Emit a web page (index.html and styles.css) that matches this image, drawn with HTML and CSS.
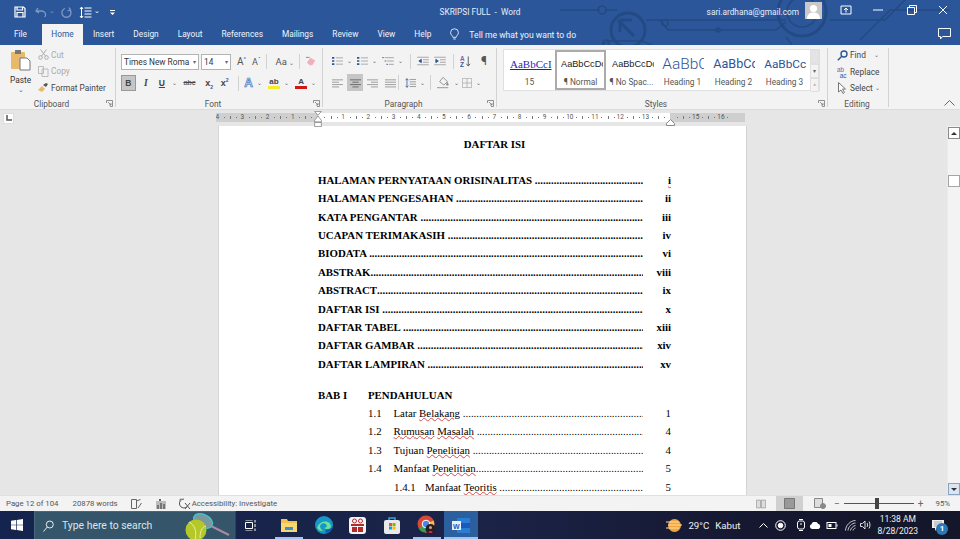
FILE: index.html
```html
<!DOCTYPE html>
<html lang="en">
<head>
<meta charset="utf-8">
<title>SKRIPSI FULL - Word</title>
<link rel="stylesheet" href="styles.css">
</head>
<body>
<div class="app">
  <header class="chrome">
    <svg class="circuit" width="400" height="45" viewBox="0 0 400 45" fill="none" stroke="#234a83" stroke-width="1.6">
      <circle cx="68" cy="30" r="17" stroke-width="3"/>
      <path d="M58 20l16 16M60 20h12M60 20v12" stroke-width="3"/>
      <circle cx="242" cy="12" r="24" stroke-width="3"/>
      <circle cx="242" cy="12" r="15"/>
      <path d="M0 10h40M45 10h12M42 44l8-3h32l10 4M86 20h140M100 20l8 10h108l10-8M270 20h55l24-24M300 40l30-30h60M232 45l-6-8"/>
      <circle cx="42" cy="10" r="4"/><circle cx="46" cy="43" r="3"/><circle cx="105" cy="23" r="3"/><circle cx="158" cy="30" r="2"/>
    </svg>
    <div class="title-row">
      <div class="qat">
        <svg class="qi-save" width="12" height="12" viewBox="0 0 12 12" fill="none" stroke="#fff" stroke-width="1.2"><path d="M1 1h8.500l1.500 1.500v8.500h-10zM3 1v3h5.500v-3M3 11v-4.500h6v4.500"/></svg>
        <svg class="qi-undo" width="12" height="12" viewBox="0 0 12 12" fill="none" stroke="#7f9ac4" stroke-width="1.300"><path d="M3 2l-2 3 3 2M1.500 5h5c3 0 4.500 2 4 4.500l-1 1.500"/></svg>
        <span class="qat-caret dim">⌄</span>
        <svg class="qi-redo" width="12" height="12" viewBox="0 0 12 12" fill="none" stroke="#7f9ac4" stroke-width="1.300"><path d="M8 1.500l1.500 2.500-3 1M9 4a4.500 4.500 0 1 1-5-1.500"/></svg>
        <svg class="qi-spacing" width="13" height="13" viewBox="0 0 13 13" fill="none" stroke="#fff"><path d="M5.500 2h7M5.500 5h7M5.500 8h7M5.500 11h7M2.500 1v11M1 3l1.500-2 1.500 2M1 10l1.500 2 1.500-2"/></svg>
        <span class="qat-caret">⌄</span>
        <svg class="qi-custom" width="7" height="7" viewBox="0 0 7 7" fill="#fff"><path d="M1 1h5v1h-5zM1 3.500h5l-2.500 2.500z"/></svg>
      </div>
      <div class="doc-title">SKRIPSI FULL &nbsp;-&nbsp; Word</div>
      <div class="account">
        <span class="email">sari.ardhana@gmail.com</span>
        <svg class="avatar" width="17" height="17" viewBox="0 0 17 17"><rect width="17" height="17" fill="#c9c9c9"/><circle cx="8.500" cy="6.500" r="3.600" fill="#fff"/><path d="M2 17c0-5 3-6.500 6.500-6.500s6.500 1.500 6.500 6.500z" fill="#fff"/></svg>
        <svg class="win win-ribbon" width="12" height="10" viewBox="0 0 12 10" fill="none" stroke="#fff"><path d="M1 1h10v8h-10z"/><path d="M6 7.500v-4M4 5l2-2 2 2" /></svg>
        <svg class="win win-min" width="10" height="10" viewBox="0 0 10 10" stroke="#fff"><path d="M0 5h10"/></svg>
        <svg class="win win-max" width="10" height="10" viewBox="0 0 10 10" fill="none" stroke="#fff"><path d="M.5 2.500h7v7h-7zM2.500 2.500v-2h7v7h-2"/></svg>
        <svg class="win win-close" width="10" height="10" viewBox="0 0 10 10" stroke="#fff"><path d="M1 1l8 8M9 1l-8 8"/></svg>
      </div>
    </div>
    <nav class="tabs">
      <span class="tab tab-file">File</span>
      <span class="tab tab-home">Home</span>
      <span class="tab tab-insert">Insert</span>
      <span class="tab tab-gap">Design</span>
      <span class="tab tab-gap">Layout</span>
      <span class="tab tab-gap">References</span>
      <span class="tab tab-gap">Mailings</span>
      <span class="tab tab-gap">Review</span>
      <span class="tab tab-gap">View</span>
      <span class="tab tab-gap">Help</span>
      <svg class="bulb" width="9" height="13" viewBox="0 0 11 14" fill="none" stroke="#fff"><path d="M3.500 10.500c0-2-2.800-3-2.800-5.700a4.800 4.800 0 0 1 9.600 0c0 2.700-2.800 3.700-2.800 5.700zM4 12.500h3"/></svg>
      <span class="tell">Tell me what you want to do</span>
      <svg class="comment" width="13" height="12" viewBox="0 0 13 12" fill="none" stroke="#fff"><path d="M.5.500h12v8h-8l-2 2.500v-2.500h-2z"/></svg>
    </nav>
  </header>

  <section class="ribbon">
    <div class="group g-clip">
      <div class="group-body clip-body">
        <div class="paste">
          <svg width="21" height="22" viewBox="0 0 21 22"><rect x="1" y="3" width="14" height="17" fill="#e8b968" rx="1"/><rect x="5" y="1" width="6" height="4" fill="#777"/><path d="M10 9h7l3 3v9h-10z" fill="#fff" stroke="#777"/></svg>
          <span class="paste-label">Paste</span>
          <span class="caret">⌄</span>
        </div>
        <div class="clip-list">
          <div class="clip-item off">
            <svg width="11" height="11" viewBox="0 0 11 11" fill="none" stroke="#aaa"><circle cx="2.500" cy="8.500" r="1.800"/><circle cx="8.500" cy="8.500" r="1.800"/><path d="M3.500 7l5-6.500M7.500 7l-5-6.500"/></svg>
            <span>Cut</span>
          </div>
          <div class="clip-item off">
            <svg width="11" height="11" viewBox="0 0 11 11" fill="#f3f3f3" stroke="#bbb"><path d="M.5.500h5v7h-5zM4 3h6v7.500h-6z"/></svg>
            <span>Copy</span>
          </div>
          <div class="clip-item">
            <svg width="11" height="11" viewBox="0 0 11 11"><path d="M0 8l4-4 3 3-3 3z" fill="#e8b968"/><path d="M5 3l3-2 2 1-2 3z" fill="#555"/></svg>
            <span>Format Painter</span>
          </div>
        </div>
      </div>
      <div class="group-label">Clipboard<svg class="launch" width="7" height="7" viewBox="0 0 7 7" fill="none" stroke="#777" stroke-width=".8"><path d="M.5 3v-2.500h6v6h-2.500M2 2l3 3M5 3v2h-2"/></svg></div>
    </div>

    <div class="group g-font">
      <div class="group-body font-body">
        <div class="font-row">
          <div class="select sel-font"><span>Times New Roma</span><i class="mini">▾</i></div>
          <div class="select sel-size"><span>14</span><i class="mini">▾</i></div>
          <span class="fbtn grow">A<sup>^</sup></span>
          <span class="fbtn shrink">A<sup>ˇ</sup></span>
          <span class="vsep"></span>
          <span class="fbtn case">Aa <i class="mini">⌄</i></span>
          <span class="vsep"></span>
          <svg class="eraser" width="12" height="11" viewBox="0 0 13 12"><path d="M2 7l4-5 5 3-3 5h-3z" fill="#efb0ba"/><path d="M1 1.500h4" stroke="#888"/></svg>
        </div>
        <div class="font-row font-row2">
          <span class="fmt fmt-b">B</span>
          <span class="fmt fmt-i">I</span>
          <span class="fmt fmt-u">U</span><i class="mini sp">⌄</i>
          <span class="fmt fmt-s">abc</span>
          <span class="fmt fmt-x">x<sub>2</sub></span>
          <span class="fmt fmt-x">x<sup>2</sup></span>
          <span class="vsep"></span>
          <span class="fx">A</span><i class="mini sp">⌄</i>
          <span class="hi"><b>ab</b><u class="hi-bar yellow"></u></span><i class="mini sp">⌄</i>
          <span class="hi"><b>A</b><u class="hi-bar red"></u></span><i class="mini sp">⌄</i>
        </div>
      </div>
      <div class="group-label">Font<svg class="launch" width="7" height="7" viewBox="0 0 7 7" fill="none" stroke="#777" stroke-width=".8"><path d="M.5 3v-2.500h6v6h-2.500M2 2l3 3M5 3v2h-2"/></svg></div>
    </div>

    <div class="group g-para">
      <div class="group-body para-body">
        <div class="para-row">
          <svg width="11" height="10" viewBox="0 0 14 12" stroke="#999"><path d="M5 2h9M5 6h9M5 10h9"/><path d="M0 2h3M0 6h3M0 10h3" stroke="#2b579a" stroke-width="2"/></svg><i class="mini sp">⌄</i>
          <svg width="11" height="10" viewBox="0 0 14 12" stroke="#999"><path d="M5 2h9M5 6h9M5 10h9"/><path d="M0 2h3M0 6h3M0 10h3" stroke="#2b579a" stroke-width="2"/></svg><i class="mini sp">⌄</i>
          <svg width="12" height="10" viewBox="0 0 14 12" stroke="#999"><path d="M3 2h11M6 6h8M8 10h6"/><path d="M0 2h2M3 6h2M5 10h2" stroke="#2b579a"/></svg><i class="mini sp">⌄</i>
          <span class="vsep"></span>
          <svg class="ind" width="12" height="10" viewBox="0 0 14 12" stroke="#999"><path d="M0 1.500h14M7 4.500h7M7 7.500h7M0 10.500h14"/><path d="M5 4l-3 2 3 2z" fill="#2b579a" stroke="#2b579a"/></svg>
          <svg class="ind" width="12" height="10" viewBox="0 0 14 12" stroke="#999"><path d="M0 1.500h14M7 4.500h7M7 7.500h7M0 10.500h14"/><path d="M2 4l3 2-3 2z" fill="#2b579a" stroke="#2b579a"/></svg>
          <span class="vsep"></span>
          <svg width="11" height="13" viewBox="0 0 12 13" fill="none"><text x="0" y="6" class="az a">A</text><text x="0" y="13" class="az z">Z</text><path d="M9 1v10M7 9l2 2.500 2-2.500" stroke="#555"/></svg>
          <span class="pilcrow">¶</span>
        </div>
        <div class="para-row para-row2">
          <svg class="al al-first" width="11" height="10" viewBox="0 0 14 12" stroke="#888"><path d="M0 2h14M0 5h9M0 8h14M0 11h9"/></svg>
          <span class="al-on"><svg width="11" height="10" viewBox="0 0 14 12" stroke="#555"><path d="M0 2h14M3 5h8M0 8h14M3 11h8"/></svg></span>
          <svg class="al al-right" width="11" height="10" viewBox="0 0 14 12" stroke="#888"><path d="M0 2h14M5 5h9M0 8h14M5 11h9"/></svg>
          <svg class="al" width="11" height="10" viewBox="0 0 14 12" stroke="#888"><path d="M0 2h14M0 5h14M0 8h14M0 11h14"/></svg>
          <span class="vsep"></span>
          <svg width="11" height="12" viewBox="0 0 14 13" stroke="#888"><path d="M6 2h8M6 5h8M6 8h8M6 11h8"/><path d="M2.500 1v11M.5 3l2-2 2 2M.5 10l2 2 2-2" stroke="#2b579a" fill="none"/></svg><i class="mini sp">⌄</i>
          <span class="vsep"></span>
          <svg width="13" height="13" viewBox="0 0 15 14" fill="none" stroke="#888"><path d="M3 6l4-5 5 5-4 4z"/><path d="M12 7l1 3-2 0z" fill="#e0a030"/><path d="M0 13h13"/></svg><i class="mini sp">⌄</i>
          <svg width="10" height="10" viewBox="0 0 13 13" fill="none" stroke="#aaa"><path d="M.5.500h12v12h-12zM6.500.500v12M.5 6.500h12"/></svg><i class="mini sp">⌄</i>
        </div>
      </div>
      <div class="group-label">Paragraph<svg class="launch" width="7" height="7" viewBox="0 0 7 7" fill="none" stroke="#777" stroke-width=".8"><path d="M.5 3v-2.500h6v6h-2.500M2 2l3 3M5 3v2h-2"/></svg></div>
    </div>

    <div class="group g-styles">
      <div class="group-body styles-body">
        <div class="gallery">
          <div class="style"><div class="s-sample s-15">AaBbCcI</div><div class="s-name">15</div></div>
          <div class="style style-on"><div class="s-sample s-normal">AaBbCcDc</div><div class="s-name">¶ Normal</div></div>
          <div class="style"><div class="s-sample s-normal">AaBbCcDc</div><div class="s-name">¶ No Spac...</div></div>
          <div class="style"><div class="s-sample s-h1">AaBbC</div><div class="s-name">Heading 1</div></div>
          <div class="style"><div class="s-sample s-h2">AaBbCc</div><div class="s-name">Heading 2</div></div>
          <div class="style"><div class="s-sample s-h3">AaBbCc</div><div class="s-name">Heading 3</div></div>
          <div class="gal-scroll">
            <span class="gs gs-up"></span><span class="gs"><i class="mini">▾</i></span><span class="gs"><i class="mini">⩡</i></span>
          </div>
        </div>
      </div>
      <div class="group-label">Styles<svg class="launch" width="7" height="7" viewBox="0 0 7 7" fill="none" stroke="#777" stroke-width=".8"><path d="M.5 3v-2.500h6v6h-2.500M2 2l3 3M5 3v2h-2"/></svg></div>
    </div>

    <div class="group g-edit">
      <div class="group-body edit-body">
        <div class="edit-item"><svg width="11" height="11" viewBox="0 0 11 11" fill="none" stroke="#2b579a" stroke-width="1.400"><circle cx="7" cy="4" r="3"/><path d="M4.800 6.200l-4 4"/></svg><span>Find</span><i class="mini sp2">⌄</i></div>
        <div class="edit-item"><svg width="11" height="12" viewBox="0 0 12 12"><text x="0" y="6" class="rep1">ab</text><text x="3" y="12" class="rep2">ac</text></svg><span>Replace</span></div>
        <div class="edit-item"><svg width="11" height="12" viewBox="0 0 11 12" fill="#fff" stroke="#777"><path d="M1.500.500v9.500l2.500-2 2 3.500 1.500-1-2-3.500h3z"/></svg><span>Select</span><i class="mini">⌄</i></div>
      </div>
      <div class="group-label label-plain">Editing</div>
    </div>
    <svg class="collapse" width="11" height="6" viewBox="0 0 11 6" fill="none" stroke="#666"><path d="M.5 5.500l5-5 5 5"/></svg>
  </section>

  <div class="ruler-row">
    <span class="tab-stop"><svg width="6" height="6" viewBox="0 0 6 6" fill="none" stroke="#555" stroke-width="1.500"><path d="M1 0v5h5"/></svg></span>
    <div class="ruler">
      <div class="ruler-track">
        <span class="rc">4</span><span class="rc">3</span><span class="rc">2</span><span class="rc">1</span><span class="rc"></span>
        <span class="rc">1</span><span class="rc">2</span><span class="rc">3</span><span class="rc">4</span><span class="rc">5</span>
        <span class="rc">6</span><span class="rc">7</span><span class="rc">8</span><span class="rc">9</span><span class="rc">10</span>
        <span class="rc">11</span><span class="rc">12</span><span class="rc">13</span><span class="rc"></span><span class="rc">15</span><span class="rc">16</span>
      </div>
      <svg class="mark-left" width="8" height="16" viewBox="0 0 9 19" fill="#fff" stroke="#888"><path d="M.5.500h8l-4 4.500zM4.500 6l4 5v2h-8v-2zM.5 13.500h8v5h-8z"/></svg>
      <svg class="mark-right" width="9" height="7" viewBox="0 0 9 7" fill="#fff" stroke="#888"><path d="M4.500.500l4 4v2h-8v-2z"/></svg>
    </div>
  </div>

  <main class="workspace">
    <article class="page">
      <h1 class="doc-h">DAFTAR ISI</h1>
      <div class="toc toc-front">
        <div class="toc-row b"><span>HALAMAN PERNYATAAN ORISINALITAS </span><span class="dots"></span><span class="num"><span class="sq">i</span></span></div>
        <div class="toc-row b"><span>HALAMAN PENGESAHAN </span><span class="dots"></span><span class="num">ii</span></div>
        <div class="toc-row b"><span>KATA PENGANTAR </span><span class="dots"></span><span class="num">iii</span></div>
        <div class="toc-row b"><span>UCAPAN TERIMAKASIH </span><span class="dots"></span><span class="num">iv</span></div>
        <div class="toc-row b"><span>BIODATA </span><span class="dots"></span><span class="num">vi</span></div>
        <div class="toc-row b"><span>ABSTRAK</span><span class="dots"></span><span class="num">viii</span></div>
        <div class="toc-row b"><span>ABSTRACT</span><span class="dots"></span><span class="num">ix</span></div>
        <div class="toc-row b"><span>DAFTAR ISI </span><span class="dots"></span><span class="num">x</span></div>
        <div class="toc-row b"><span>DAFTAR TABEL </span><span class="dots"></span><span class="num">xiii</span></div>
        <div class="toc-row b"><span>DAFTAR GAMBAR </span><span class="dots"></span><span class="num">xiv</span></div>
        <div class="toc-row b"><span>DAFTAR LAMPIRAN </span><span class="dots"></span><span class="num">xv</span></div>
      </div>
      <div class="toc toc-main">
        <div class="toc-row b"><span class="bab">BAB I</span><span>PENDAHULUAN</span></div>
        <div class="toc-row lv1"><span class="idx">1.1</span><span>Latar <span class="sq">Belakang</span> </span><span class="dots"></span><span class="num">1</span></div>
        <div class="toc-row lv1"><span class="idx">1.2</span><span><span class="sq">Rumusan</span> <span class="sq">Masalah</span> </span><span class="dots"></span><span class="num">4</span></div>
        <div class="toc-row lv1"><span class="idx">1.3</span><span>Tujuan <span class="sq">Penelitian</span> </span><span class="dots"></span><span class="num">4</span></div>
        <div class="toc-row lv1"><span class="idx">1.4</span><span>Manfaat <span class="sq">Penelitian</span></span><span class="dots"></span><span class="num">5</span></div>
        <div class="toc-row lv2"><span class="idx2">1.4.1</span><span>Manfaat <span class="sq">Teoritis</span> </span><span class="dots"></span><span class="num">5</span></div>
      </div>
    </article>
    <aside class="vscroll">
      <span class="sb-btn"><i class="tri-up"></i></span>
      <span class="sb-thumb"></span>
      <span class="sb-btn sb-down"><i class="tri-down"></i></span>
    </aside>
  </main>

  <footer class="status">
    <span class="st st-page">Page 12 of 104</span>
    <span class="st st-words">20878 words</span>
    <svg class="st-i1" width="11" height="10" viewBox="0 0 11 10" fill="none" stroke="#666"><path d="M.5.500h5v9h-5zM5.500 2l4-1.500M7 9l3.500-5"/></svg>
    <svg class="st-i2" width="10" height="10" viewBox="0 0 10 10" fill="#777"><path d="M0 2h10v8h-10z" fill="#bbb"/><path d="M1 6h2v4h-2zM4 4h2v6h-2zM7 5h2v5h-2z"/><circle cx="4" cy="1" r="1" fill="#333"/></svg>
    <svg class="st-i3" width="14" height="12" viewBox="0 0 14 12" fill="none" stroke="#555"><path d="M6 1a4.500 4.500 0 1 0 3 7.800M3 .500l-1.500 2M7 5l5 6M12 5l-5 6" /></svg>
    <span class="st">Accessibility: Investigate</span>
    <div class="status-right">
      <svg class="view-read" width="10" height="10" viewBox="0 0 13 11" fill="#ddd" stroke="#999"><path d="M.5.500h5.500v10h-5.500zM7 .500h5.500v10h-5.500z"/></svg>
      <span class="view-on"><svg width="11" height="11" viewBox="0 0 11 11" fill="#999" stroke="#777"><path d="M.5.500h10v10h-10z"/></svg></span>
      <svg class="view-web" width="12" height="11" viewBox="0 0 12 11" fill="#ddd" stroke="#888"><path d="M.5.500h8v9h-8z"/><circle cx="9" cy="8" r="2.500" fill="#888"/></svg>
      <span class="z-btn z-minus">−</span>
      <span class="z-track"><i class="z-thumb"></i></span>
      <span class="z-btn">+</span>
      <span class="st z-pct">95%</span>
    </div>
  </footer>

  <nav class="taskbar">
    <svg class="win-logo" width="12" height="12" viewBox="0 0 12 12" fill="#fff"><path d="M0 1.700l5-.7v4.700h-5zM5.700.900l6.300-.9v5.700h-6.300zM0 6.300h5v4.700l-5-.7zM5.700 6.300h6.300v5.700l-6.300-.9z"/></svg>
    <div class="search">
      <svg width="11" height="12" viewBox="0 0 11 12" fill="none" stroke="#e6eef2"><circle cx="6.800" cy="4.500" r="3.500"/><path d="M4.300 7l-3.800 4.500"/></svg>
      <span class="search-text">Type here to search</span>
      <svg class="racket" width="46" height="28" viewBox="0 0 46 28">
        <ellipse cx="18" cy="9" rx="10" ry="6.500" fill="#7d979e" stroke="#45c0c8" stroke-width="1.500" transform="rotate(25 18 9)"/>
        <path d="M26 14l18 9" stroke="#a88aa6" stroke-width="2"/>
        <circle cx="11" cy="18" r="10.500" fill="#b4c828"/>
        <path d="M4 10c6 3 8 10 6 18M21 14c-4 1-6 5-6 12" stroke="#e8f0a0" fill="none"/>
      </svg>
    </div>
    <div class="tb-icons">
      <span class="tb tb-task"><svg width="12" height="11" viewBox="0 0 12 11" fill="none" stroke="#fff"><path d="M.5 2.500h7v6h-7zM.5 0h7M.5 11h7M10 0v2.500M10 4v3M10 8.500v2.500"/></svg></span>
      <span class="tb tb-run"><svg width="16" height="14" viewBox="0 0 16 14"><path d="M0 1h6l1 2h9v11h-16z" fill="#f3c14a"/><path d="M0 5h16v9h-16z" fill="#f7d774"/><path d="M4 9h8v3h-8z" fill="#3d8fd0"/></svg></span>
      <span class="tb"><svg width="18" height="18" viewBox="0 0 17 17"><circle cx="8.500" cy="8.500" r="8.500" fill="#1597c9"/><path d="M2 11c3-8 13-7 13-1 0 3-6 3-6 1 4 0 2-5-2-4-3 .700-3 5 1 7-3 .500-5-1-6-3z" fill="#6fe09a"/><path d="M10 16c3 0 6-2 7-6-2 2-4 3-7 3z" fill="#0c5fa8"/></svg></span>
      <span class="tb"><svg width="17" height="17" viewBox="0 0 17 17"><rect width="17" height="17" rx="3" fill="#f4f4f4"/><path d="M2 7h13v2h-13zM3 10h5v5h-5zM9 10h5v5h-5z" fill="#b62a2a"/><circle cx="5.500" cy="4" r="2" fill="none" stroke="#b62a2a"/><circle cx="11.500" cy="4" r="2" fill="none" stroke="#b62a2a"/></svg></span>
      <span class="tb"><svg width="16" height="17" viewBox="0 0 16 17"><rect y="3" width="16" height="14" rx="2" fill="#e9e9e9"/><path d="M5 3v-2h6v2" fill="none" stroke="#3d9fe0" stroke-width="1.500"/><path d="M5 6h3v3h-3z" fill="#f25022"/><path d="M8.500 6h3v3h-3z" fill="#7fba00"/><path d="M5 9.500h3v3h-3z" fill="#00a4ef"/><path d="M8.500 9.500h3v3h-3z" fill="#ffb900"/></svg></span>
      <span class="tb tb-run"><svg width="20" height="20" viewBox="0 0 20 20"><circle cx="9" cy="9" r="8.500" fill="#d8483a"/><path d="M9 9l-7.500 4a8.500 8.500 0 0 0 8 4.500z" fill="#3a9e50"/><path d="M9 9l7.500-3.500a8.500 8.500 0 0 1-7 12z" fill="#f0c33c"/><circle cx="9" cy="9" r="3.800" fill="#4a86e0" stroke="#fff"/><circle cx="13.500" cy="14" r="5" fill="#2a1c24"/><circle cx="13.500" cy="12.500" r="1.500" fill="#d0a090"/><path d="M11.500 18c0-3 4-3 4 0z" fill="#c03040"/></svg></span>
      <span class="tb tb-word"><svg width="18" height="15" viewBox="0 0 18 15"><path d="M5 0h13v15h-13z" fill="#2b7cd3"/><path d="M5 5h13v5h-13z" fill="#185abd"/><path d="M0 3h9v9h-9z" fill="#e8f0fa"/><text x="1" y="10.500" class="w-letter">W</text></svg></span>
    </div>
    <div class="tray">
      <svg class="weather" width="16" height="15" viewBox="0 0 16 15"><circle cx="8.500" cy="7.500" r="6.500" fill="#f3a53a"/><path d="M0 4h13M2 7h14M0 10h13" stroke="#fbe2a5" stroke-width="1.200"/></svg>
      <span class="temp">29°C</span>
      <span class="temp cond">Kabut</span>
      <svg class="ti-chev" width="9" height="5" viewBox="0 0 9 5" fill="none" stroke="#fff"><path d="M.5 4.500l4-4 4 4"/></svg>
      <svg class="ti-rec" width="11" height="11" viewBox="0 0 11 11" fill="none" stroke="#fff"><circle cx="5.500" cy="5.500" r="4.800"/><circle cx="5.500" cy="5.500" r="2.300" fill="#fff"/></svg>
      <svg class="ti-cam" width="8" height="12" viewBox="0 0 8 12" fill="none" stroke="#fff"><rect x=".5" y="2" width="7" height="8" rx="2"/><path d="M2 .500h4M2 11.500h4M3 5h2"/></svg>
      <svg class="ti-cloud" width="12" height="7" viewBox="0 0 12 7" fill="#fff"><path d="M3 7a2.500 2.500 0 0 1-.500-4.800 3.500 3.500 0 0 1 6.500-.5 2.800 2.800 0 0 1 .500 5.300z"/></svg>
      <svg class="ti-batt" width="12" height="7" viewBox="0 0 11 7" fill="none" stroke="#fff"><rect x=".5" y=".5" width="9" height="6"/><path d="M2 2h3v3h-3z" fill="#fff" stroke="none"/><path d="M10.500 2.500v2"/></svg>
      <svg class="ti-wifi" width="11" height="11" viewBox="0 0 11 11" fill="none" stroke="#c8c8c8"><path d="M.5 10.500c0-5 5-10 10-10M3 10.500c0-3.500 4-7.500 7.500-7.500M5.500 10.500c0-2 3-5 5-5M8 10.500c0-1 1.500-2.500 2.500-2.500"/></svg>
      <svg class="ti-vol" width="11" height="10" viewBox="0 0 11 10" fill="none" stroke="#ddd"><path d="M.5 3.500h2l2.500-2.500v8l-2.500-2.500h-2zM7 3c.7 1 .7 3 0 4M9 1.500c1.300 2 1.300 5 0 7"/></svg>
      <div class="clock"><span>11:38 AM</span><span>8/28/2023</span></div>
      <span class="notif">
        <svg width="12" height="11" viewBox="0 0 12 11" fill="#eee"><path d="M0 0h12v8h-7l-2 3v-3h-3z"/><path d="M2 2h8M2 4h8M2 6h5" stroke="#888" stroke-width=".7"/></svg>
        <i class="badge">1</i>
      </span>
    </div>
  </nav>
</div>
</body>
</html>
```
FILE: styles.css
```css
* { box-sizing: border-box; }
html, body { margin: 0; padding: 0; }
body { width: 960px; height: 539px; overflow: hidden; font-family: Roboto, "Liberation Sans", sans-serif; font-size: 8.3px; color: #444; }
i { font-style: normal; }
svg { display: block; flex: none; }
.app { width: 960px; height: 539px; display: flex; flex-direction: column; overflow: hidden; }

/* title bar */
.chrome { position: relative; height: 45px; flex: none; background: #2b579a; color: #fff; overflow: hidden; }
.circuit { position: absolute; left: 560px; top: 0; }
.title-row { position: relative; height: 24px; display: flex; align-items: center; }
.qat { display: flex; align-items: center; padding-left: 14px; width: 430px; }
.qi-undo { margin-left: 9px; }
.qat-caret { font-size: 7px; line-height: 7px; margin: -2px 0 0 2px; width: 7px; }
.qat-caret.dim { color: #7f9ac4; }
.qi-redo { margin-left: 5px; }
.qi-spacing { margin-left: 6px; }
.qi-custom { margin-left: 8px; }
.doc-title { width: 100px; text-align: center; white-space: nowrap; color: #e8eef7; }
.account { display: flex; align-items: center; margin-left: auto; padding-right: 12px; }
.email { margin-right: 6px; color: #e8eef7; }
.avatar { margin-right: 18px; margin-top: -3px; }
.win { margin-top: -4px; }
.win-min { margin-left: 21px; }
.win-max { margin-left: 24px; }
.win-close { margin-left: 21px; }
.tabs { position: relative; height: 21px; display: flex; align-items: center; color: #f1f4f9; }
.tab { display: block; line-height: 21px; white-space: nowrap; }
.tab-file { margin-left: 14px; }
.tab-home { margin-left: 15px; width: 41px; text-align: center; background: #f3f3f3; color: #2b579a; }
.tab-insert { margin-left: 10px; }
.tab-gap { margin-left: 19px; }
.bulb { margin-left: 19px; }
.tell { margin-left: 10px; font-size: 8.600px; }
.comment { position: absolute; left: 938px; top: 4px; }

/* ribbon */
.ribbon { position: relative; height: 64px; flex: none; display: flex; background: #f3f3f3; }
.group { display: flex; flex-direction: column; border-right: 1px solid #d2d2d2; margin: 3px 0 2px; position: relative; }
.group-body { flex: 1; min-height: 0; }
.group-label { height: 12px; line-height: 12px; text-align: center; position: relative; color: #555; margin-bottom: -2.500px; padding-right: 12px; }
.label-plain { padding-right: 2px; }
.launch { position: absolute; right: 2px; top: 2px; }
.g-clip { width: 116px; }
.g-font { width: 207px; }
.g-para { width: 174px; }
.g-styles { width: 331px; }
.g-edit { width: 61px; }
.clip-body { display: flex; padding: 1px 0 0 10px; }
.paste { width: 21px; display: flex; flex-direction: column; align-items: center; }
.paste-label { margin-top: 4px; line-height: 10px; white-space: nowrap; color: #333; }
.caret { font-size: 7px; line-height: 8px; color: #666; margin-top: 1px; }
.clip-list { margin-left: 7px; display: flex; flex-direction: column; gap: 5px; }
.clip-item { display: flex; align-items: center; gap: 2px; height: 11.5px; white-space: nowrap; color: #444; }
.clip-item.off { color: #aaa; }
.font-body { padding: 5px 0 0 5px; }
.font-row { display: flex; align-items: center; height: 17px; }
.font-row2 { margin-top: 4.500px; }
.select { height: 16px; background: #fff; border: 1px solid #b4b4b4; display: flex; align-items: center; justify-content: space-between; padding: 0 2px; white-space: nowrap; color: #333; }
.sel-font { width: 78px; }
.sel-size { width: 30px; margin-left: 2px; }
.mini { font-size: 6px; color: #666; line-height: 8px; }
.sp { margin: 0 6px 0 4px; }
.sp2 { margin-left: 6px; }
.fbtn { font-size: 10px; color: #555; white-space: nowrap; }
.fbtn sup { font-size: 6px; color: #2b579a; line-height: 0; }
.grow { margin-left: 6px; }
.shrink { margin-left: 6px; font-size: 9px; }
.case { margin-left: 4px; font-size: 9.500px; }
.vsep { width: 1px; height: 15px; background: #d2d2d2; margin: 0 5px; flex: none; }
.fmt { font-family: "Liberation Sans", sans-serif; font-size: 8.500px; color: #444; width: 15px; text-align: center; line-height: 16px; height: 16px; }
.fmt-b { font-weight: 700; background: #c6c6c6; border: 1px solid #999; line-height: 14px; margin-right: 3px; }
.fmt-i { font-family: "Liberation Serif", serif; font-style: italic; font-weight: 700; font-size: 9.500px; }
.fmt-u { text-decoration: underline; font-weight: 700; margin-left: 3px; width: 12px; }
.fmt-s { text-decoration: line-through; font-size: 7.500px; width: 14px; margin-right: 6px; }
.fmt-x { font-weight: 700; font-size: 9px; margin-right: 2px; width: 14px; }
.fmt-x sub, .fmt-x sup { font-size: 5px; line-height: 0; color: #2b579a; }
.fx { font-family: "Liberation Sans", sans-serif; font-weight: 700; font-size: 12px; color: #c9dcf3; -webkit-text-stroke: .6px #2b6cb8; }
.hi { display: flex; flex-direction: column; align-items: center; width: 12px; }
.hi b { font-family: "Liberation Sans", sans-serif; font-size: 8px; line-height: 9px; color: #444; }
.hi-bar { display: block; width: 12px; height: 3.500px; }
.yellow { background: #f5ec2a; }
.red { background: #d01818; }
.para-body { padding: 5px 0 0 9px; }
.para-row { display: flex; align-items: center; height: 16px; }
.para-row .sp { margin-right: 5px; }
.para-row2 .sp { margin-right: 3px; }
.para-row .vsep { margin: 0 6px 0 2px; }
.para-row2 { margin-top: 5.500px; }
.ind { margin-right: 5px; }
.az { font-family: "Liberation Sans", sans-serif; font-size: 7px; font-weight: 700; }
.az.a { fill: #8a5aa8; }
.az.z { fill: #2b579a; }
.pilcrow { margin-left: 10px; font-size: 12px; line-height: 14px; color: #555; }
.al-first { margin-right: 4px; }
.al-right { margin-right: 7px; }
.al-on { width: 16px; height: 17px; background: #c6c6c6; display: flex; align-items: center; justify-content: center; margin-right: 4px; }
.styles-body { padding: 1px 0 0 6px; }
.gallery { width: 317px; height: 42px; background: #fff; border: 1px solid #e0e0e0; display: flex; }
.style { width: 51px; padding: 0 0 0 3px; overflow: hidden; display: flex; flex-direction: column; align-items: center; border: 2px solid transparent; flex: none; }
.style-on { border-color: #ababab; }
.s-sample { height: 24px; line-height: 24px; white-space: nowrap; overflow: hidden; width: 42px; text-align: left; flex: none; }
.s-name { white-space: nowrap; line-height: 12px; color: #555; margin-left: -3px; }
.s-15 { font-family: "Liberation Serif", serif; font-size: 11px; color: #1f1fb8; text-decoration: underline; }
.s-normal { font-family: "Liberation Sans", sans-serif; font-size: 9.200px; color: #222; }
.s-h1 { font-size: 15.500px; color: #2f5496; font-weight: 300; margin-left: -1.500px; }
.s-h2 { font-size: 12.600px; color: #2f5496; margin-left: -1.500px; }
.s-h3 { font-size: 11.800px; color: #2f5496; margin-left: -1.500px; }
.gal-scroll { width: 10px; margin-left: auto; display: flex; flex-direction: column; border-left: 1px solid #e0e0e0; }
.gs { height: 14px; flex: none; display: flex; align-items: center; justify-content: center; background: #f3f3f3; border: 1px solid #e0e0e0; border-left: none; }
.gs-up { background: #e4e4e4; }
.edit-body { padding: 1px 0 0 9px; display: flex; flex-direction: column; gap: 4.500px; }
.edit-item { display: flex; align-items: center; gap: 2px; height: 12px; white-space: nowrap; color: #444; }
.rep1 { font-size: 7px; fill: #8a5aa8; font-family: "Liberation Sans", sans-serif; }
.rep2 { font-size: 7px; fill: #2b579a; font-family: "Liberation Sans", sans-serif; }
.collapse { position: absolute; left: 944px; top: 55px; }

/* ruler */
.ruler-row { height: 17px; flex: none; background: #e6e6e6; display: flex; align-items: center; position: relative; border-top: 1px solid #dcdcdc; }
.tab-stop { width: 11px; height: 11px; margin-left: 3px; background: #fff; border: 1px solid #ddd; display: flex; align-items: center; justify-content: center; flex: none; }
.ruler { margin-left: 202px; width: 529px; height: 9px; position: relative; margin-top: -1px; background: linear-gradient(to right, #cfcfcf 102px, #fff 102px, #fff 454px, #cfcfcf 454px); }
.ruler-track { display: flex; height: 9px; margin-left: -11.4px; width: 540px; clip-path: inset(0 0 0 11.4px); }
.rc { width: 25.2px; flex: none; text-align: center; font-size: 6.500px; line-height: 9px; color: #555;
  background:
    linear-gradient(#777, #777) 0 3px / 1px 3px no-repeat,
    linear-gradient(#777, #777) 6px 4px / 1px 1px no-repeat,
    linear-gradient(#777, #777) 19px 4px / 1px 1px no-repeat; }
.mark-left { position: absolute; left: 98px; top: -2px; }
.mark-right { position: absolute; left: 450px; top: 6px; }

/* workspace */
.workspace { flex: 1; min-height: 0; display: flex; background: #e6e6e6; padding-left: 219px; overflow: hidden; }
.page { width: 527px; flex: none; background: #fff; padding: 9px 75px 0 99px; font-family: "Liberation Serif", serif; font-size: 10.850px; color: #000; box-shadow: 0 0 0 1px #d4d4d4; }
.doc-h { margin: 0 0 17.500px; font-size: inherit; font-weight: 700; line-height: 18.400px; text-align: center; }
.toc-main { margin-top: 12.500px; }
.toc-row { display: flex; height: 18.400px; line-height: 18.400px; white-space: pre; }
.toc-row.b { font-weight: 700; }
.dots { flex: 1; min-width: 0; overflow: hidden; }
.dots::before { content: "................................................................................................................................................................................."; }
.num { width: 28px; flex: none; text-align: right; }
.bab { width: 50px; flex: none; }
.lv1 { padding-left: 50px; }
.idx { width: 25.500px; flex: none; }
.lv2 { padding-left: 76px; }
.idx2 { width: 31px; flex: none; }
.sq { text-decoration: underline wavy #d84a4a .5px; text-underline-offset: 0; }
.vscroll { width: 13px; margin-left: auto; background: #f3f3f3; display: flex; flex-direction: column; align-items: center; padding-top: 1px; border-left: 1px solid #ebebeb; }
.sb-btn { width: 12px; height: 12px; background: #fff; border: 1px solid #8a8a8a; display: flex; align-items: center; justify-content: center; flex: none; }
.sb-thumb { width: 12px; height: 12px; background: #fff; border: 1px solid #a5a5a5; margin-top: 36px; flex: none; }
.sb-down { margin-top: auto; background: #dce6f3; border-color: #8aa3c4; }
.tri-up, .tri-down { width: 0; height: 0; border-left: 3px solid transparent; border-right: 3px solid transparent; }
.tri-up { border-bottom: 3px solid #333; }
.tri-down { border-top: 3px solid #333; }

/* status */
.status { height: 16px; flex: none; background: #f3f3f3; display: flex; align-items: center; border-top: 1px solid #e0e0e0; font-size: 7.800px; color: #555; }
.st { white-space: nowrap; }
.st-page { margin-left: 6px; }
.st-words { margin-left: 14px; }
.st-i1 { margin-left: 13px; }
.st-i2 { margin-left: 14px; }
.st-i3 { margin-left: 12px; margin-right: 0; }
.status-right { margin-left: auto; display: flex; align-items: center; height: 100%; }
.view-on { width: 27px; height: 100%; background: #d0d0d0; display: flex; align-items: center; justify-content: center; margin: 0 11px 0 10px; }
.z-btn { font-size: 10px; line-height: 10px; color: #666; }
.z-minus { margin-left: 8px; }
.z-track { width: 70px; height: 1px; background: #555; margin: 0 4px; position: relative; }
.z-thumb { position: absolute; left: 31px; top: -5px; width: 4px; height: 11px; background: #444; }
.z-pct { margin: 0 10px 0 12px; }

/* taskbar */
.taskbar { height: 28px; flex: none; display: flex; align-items: center; background: linear-gradient(to right, #14244e, #1b2347 50%, #15172f 80%, #14162a); color: #fff; }
.win-logo { margin-left: 11px; }
.search { width: 202px; height: 28px; margin-left: 11px; background: #35566a; display: flex; align-items: center; padding-left: 8px; position: relative; border: 1px solid #47677a; border-bottom: none; border-right-color: #2a4454; }
.search-text { margin-left: 8px; font-size: 10.400px; color: #dbe5ea; white-space: nowrap; }
.racket { position: absolute; right: 4px; top: 0; }
.tb-icons { display: flex; align-items: center; height: 28px; }
.tb { height: 28px; display: flex; align-items: center; justify-content: center; flex: none; position: relative; width: 34.4px; }
.tb-task { width: 30px; margin-right: 6px; }
.tb-run::after { content: ""; position: absolute; left: 3px; right: 3px; bottom: 0; height: 2px; background: #9fc4ee; }
.tb-word { background: #2c5f9e; }
.tb-word::after { content: ""; position: absolute; left: 0; right: 0; bottom: 0; height: 2px; background: #9fc4ee; }
.w-letter { font-family: "Liberation Sans", sans-serif; font-size: 7px; font-weight: 700; fill: #185abd; }
.tray { margin-left: auto; display: flex; align-items: center; height: 28px; }
.weather { margin-right: 6px; }
.temp { font-size: 9.700px; white-space: nowrap; color: #eee; margin-right: 6px; }
.cond { margin-right: 18px; }
.ti-rec { margin-left: 7px; }
.ti-cam { margin-left: 11px; }
.ti-cloud { margin-left: 4px; }
.ti-batt { margin-left: 5px; }
.ti-wifi { margin-left: 7px; }
.ti-vol { margin-left: 4px; }
.clock { display: flex; flex-direction: column; align-items: center; font-size: 8.500px; line-height: 12px; color: #f0f0f0; margin: 0 8px 0 7px; white-space: nowrap; }
.notif { position: relative; width: 22px; height: 20px; display: flex; align-items: center; margin-right: 12px; padding-left: 6px; }
.badge { position: absolute; right: 0; bottom: 0; width: 12px; height: 12px; border-radius: 50%; background: #2b78b8; color: #fff; font-size: 8px; line-height: 12px; text-align: center; font-weight: 700; }
```
